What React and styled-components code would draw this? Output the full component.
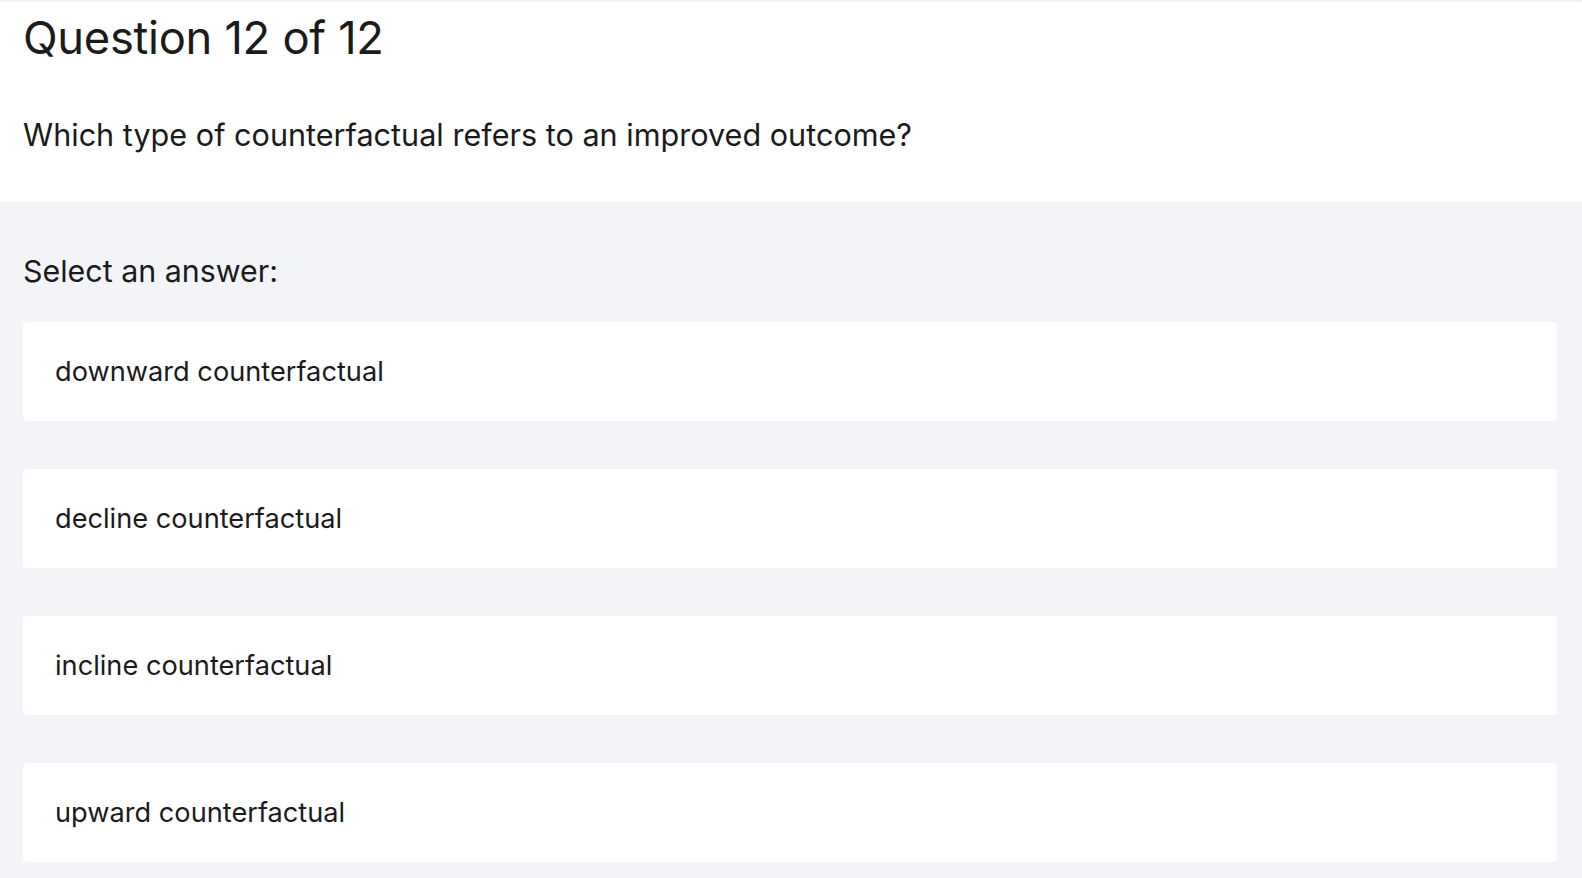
import React from 'react';
import styled, { createGlobalStyle } from 'styled-components';

const GlobalStyle = createGlobalStyle`
  html, body {
    margin: 0;
    padding: 0;
    background: #f3f4f8;
    font-family: Inter, "Open Sans", sans-serif;
    color: #1b1b1b;
  }
`;

const options = [
  'downward counterfactual',
  'decline counterfactual',
  'incline counterfactual',
  'upward counterfactual',
];

const App = () => {
  return (
    <Page>
      <GlobalStyle />
      {/* 질문 영역 */}
      <Header>
        <Title>Question 12 of 12</Title>
        <Prompt>Which type of counterfactual refers to an improved outcome?</Prompt>
      </Header>
      {/* 답 선택 */}
      <Answers>
        <Label>Select an answer:</Label>
        <List>
          {options.map((opt) => (
            <Option key={opt}>{opt}</Option>
          ))}
        </List>
      </Answers>
    </Page>
  );
};

const Page = styled.div`
  width: 100%;
  min-height: 878px;
  background: #f3f4f8;
`;

const Header = styled.div`
  height: 202px;
  box-sizing: border-box;
  padding: 11px 23px 0;
  background: #fff;
  box-shadow: inset 0 3px 3px -2px rgba(0, 0, 0, 0.09);
`;

const Title = styled.h1`
  margin: 0;
  font-size: 45.3px;
  font-weight: 400;
  line-height: 54px;
  letter-spacing: -0.3px;
`;

const Prompt = styled.p`
  margin: 51px 0 0;
  font-size: 30.6px;
  font-weight: 400;
  line-height: 38px;
`;

const Answers = styled.div`
  padding: 50px 25px 0 23px;
`;

const Label = styled.div`
  font-size: 30.4px;
  line-height: 38px;
`;

const List = styled.div`
  display: flex;
  flex-direction: column;
  gap: 48px;
  margin-top: 32px;
`;

const Option = styled.div`
  height: 99px;
  box-sizing: border-box;
  display: flex;
  align-items: center;
  padding: 0 32px;
  background: #fff;
  border-radius: 4px;
  font-size: 27.2px;
`;

export default App;
